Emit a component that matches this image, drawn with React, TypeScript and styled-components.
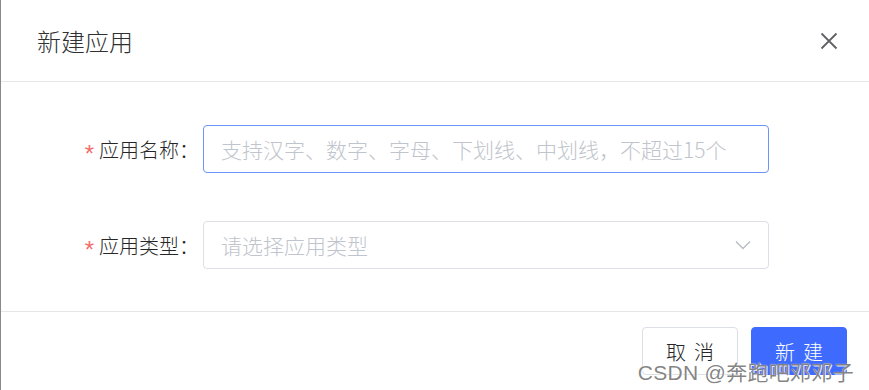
import React from 'react';
import styled, { createGlobalStyle } from 'styled-components';

const GlobalStyle = createGlobalStyle`
  html, body {
    margin: 0;
    padding: 0;
    background: #ffffff;
    font-family: "Noto Sans CJK SC", "Noto Sans", "Liberation Sans", sans-serif;
  }
  * {
    box-sizing: border-box;
  }
`;

// Окно диалога
const Dialog = styled.div`
  position: relative;
  width: 869px;
  height: 390px;
  overflow: hidden;
  background: #ffffff;
  border-left: 1px solid #8a8a8a;
  display: flex;
  flex-direction: column;
`;

const Header = styled.div`
  height: 82px;
  padding: 0 30px 0 36px;
  display: flex;
  align-items: center;
  justify-content: space-between;
  border-bottom: 1px solid #e6e6e6;
`;

const Title = styled.h2`
  margin: 0;
  font-size: 24px;
  font-weight: 300;
  color: #303133;
  line-height: 1;
`;

const CloseButton = styled.button`
  border: none;
  background: transparent;
  padding: 0;
  width: 20px;
  height: 20px;
  display: flex;
  align-items: center;
  justify-content: center;
  cursor: pointer;
`;

const Body = styled.div`
  padding: 43px 100px 42px 0;
  display: flex;
  flex-direction: column;
  gap: 48px;
  border-bottom: 1px solid #e6e6e6;
`;

const FormRow = styled.div`
  display: flex;
  align-items: center;
`;

const Label = styled.label`
  width: 202px;
  padding-right: 4px;
  display: flex;
  align-items: center;
  justify-content: flex-end;
  font-size: 20px;
  font-weight: 300;
  color: #262626;
  white-space: nowrap;
`;

const Required = styled.span`
  display: inline-block;
  font-family: "Liberation Sans", sans-serif;
  font-size: 24px;
  line-height: 1;
  color: #f56c6c;
  margin-right: 5px;
  transform: translateY(5px);
`;

const Field = styled.div<{ $focused?: boolean }>`
  flex: 1;
  height: 48px;
  border: 1px solid ${(p) => (p.$focused ? '#6a94f9' : '#dcdfe6')};
  border-radius: 4px;
  padding: 0 17px;
  display: flex;
  align-items: center;
  justify-content: space-between;
`;

const TextInput = styled.input`
  flex: 1;
  border: none;
  outline: none;
  padding: 0;
  font-family: inherit;
  font-size: 21px;
  font-weight: 300;
  color: #303133;
  background: transparent;

  &::placeholder {
    color: #c0c4cc;
  }
`;

const Placeholder = styled.span`
  font-size: 21px;
  font-weight: 300;
  color: #c0c4cc;
`;

const Footer = styled.div`
  padding: 15px 22px 0 0;
  display: flex;
  justify-content: flex-end;
  gap: 13px;
`;

const Button = styled.button<{ $primary?: boolean }>`
  width: 96px;
  height: 48px;
  border-radius: 4px;
  border: 1px solid ${(p) => (p.$primary ? '#3e6bfd' : '#dcdfe6')};
  background: ${(p) => (p.$primary ? '#3e6bfd' : '#ffffff')};
  color: ${(p) => (p.$primary ? '#ffffff' : '#262626')};
  font-family: inherit;
  font-size: 20px;
  font-weight: 300;
  letter-spacing: 8px;
  text-indent: 8px;
  cursor: pointer;
`;

// Водяной знак поверх футера
const Watermark = styled.div`
  position: absolute;
  right: 15px;
  bottom: 7px;
  font-family: "Liberation Sans", "Noto Sans CJK SC", sans-serif;
  font-size: 21px;
  line-height: 1;
  letter-spacing: 0.3px;
  color: rgba(110, 110, 110, 0.85);
  text-shadow: 0 0 1px #fff, 1px 1px 0 rgba(255, 255, 255, 0.8);
  pointer-events: none;
  white-space: nowrap;
`;

const CloseIcon = () => (
  <svg width="18" height="18" viewBox="0 0 18 18" fill="none">
    <path d="M1.5 1.5 L16.5 16.5 M16.5 1.5 L1.5 16.5" stroke="#606266" strokeWidth="1.8" />
  </svg>
);

const ChevronDown = () => (
  <svg width="16" height="10" viewBox="0 0 16 10" fill="none">
    <path d="M1 1.5 L8 8.5 L15 1.5" stroke="#b8bcc4" strokeWidth="1.4" />
  </svg>
);

const App: React.FC = () => {
  return (
    <>
      <GlobalStyle />
      <Dialog>
        <Header>
          <Title>新建应用</Title>
          <CloseButton aria-label="close">
            <CloseIcon />
          </CloseButton>
        </Header>
        <Body>
          <FormRow>
            <Label>
              <Required>*</Required>应用名称：
            </Label>
            <Field $focused>
              <TextInput placeholder="支持汉字、数字、字母、下划线、中划线，不超过15个" />
            </Field>
          </FormRow>
          <FormRow>
            <Label>
              <Required>*</Required>应用类型：
            </Label>
            <Field>
              <Placeholder>请选择应用类型</Placeholder>
              <ChevronDown />
            </Field>
          </FormRow>
        </Body>
        <Footer>
          <Button>取消</Button>
          <Button $primary>新建</Button>
        </Footer>
        <Watermark>CSDN @奔跑吧邓邓子</Watermark>
      </Dialog>
    </>
  );
};

export default App;
